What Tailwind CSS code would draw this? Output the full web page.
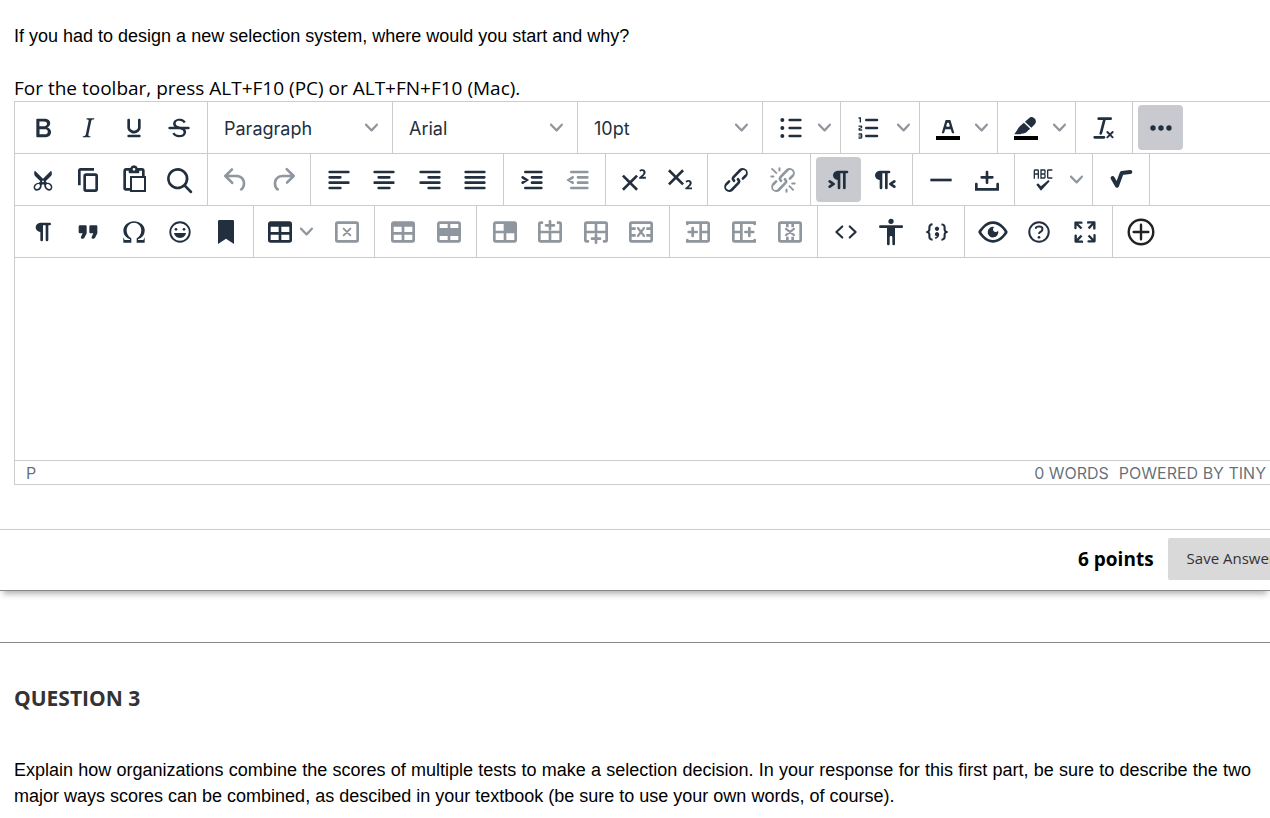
<!doctype html>
<html lang="en">
  <head>
    <meta charset="UTF-8" />
    <meta name="viewport" content="width=device-width, initial-scale=1.0" />
    <title>Test</title>
    <script src="https://cdn.jsdelivr.net/npm/@tailwindcss/browser@4"></script>
  </head>

  <body class="bg-white text-black font-['Open_Sans',sans-serif] overflow-x-hidden">
    <!-- Icon sprite, all on a 24x24 grid -->
    <svg class="hidden">
      <symbol id="bold" viewBox="0 0 24 24"><path fill-rule="evenodd" d="M7.8 19c-.3 0-.5 0-.6-.2l-.2-.5V5.7c0-.2 0-.4.2-.5l.6-.2h5c1.5 0 2.7.3 3.5 1 .7.6 1.1 1.4 1.1 2.5a3 3 0 0 1-.6 1.9c-.4.6-1 1-1.6 1.2.4.1.9.3 1.3.6s.8.7 1 1.2c.4.4.5 1 .5 1.6 0 1.3-.4 2.3-1.3 3-.8.7-2.1 1-3.8 1H7.8zm5-8.3c.6 0 1.2-.1 1.6-.5.4-.3.6-.7.6-1.3 0-1.1-.8-1.7-2.3-1.7H9.3v3.5h3.4zm.5 6c.7 0 1.3-.1 1.7-.4.4-.4.6-.9.6-1.5s-.2-1-.7-1.4c-.4-.3-1-.4-2-.4H9.4v3.6h4z" /></symbol>
      <symbol id="italic" viewBox="0 0 24 24"><path d="M16.7 4.7l-.1.9h-.3c-.6 0-1 0-1.4.3-.3.3-.4.6-.5 1.1l-2.1 9.8v.6c0 .5.4.8 1.4.8h.2l-.2.8H8l.2-.8h.2c1.1 0 1.8-.5 2-1.5l2-9.8.1-.5c0-.6-.4-.8-1.4-.8h-.3l.2-.9h5.7z" /></symbol>
      <symbol id="underline" viewBox="0 0 24 24"><path d="M16 5c.6 0 1 .4 1 1v5.5a4 4 0 0 1-.4 1.8l-1 1.4a5.3 5.3 0 0 1-5.5 1 5 5 0 0 1-1.6-1c-.5-.4-.8-.9-1.1-1.4a4 4 0 0 1-.4-1.8V6c0-.6.4-1 1-1s1 .4 1 1v5.5c0 .3 0 .6.2 1l.6.7a3.3 3.3 0 0 0 2.2.8 3.4 3.4 0 0 0 2.2-.8c.3-.2.4-.5.6-.8l.2-.9V6c0-.6.4-1 1-1zM8 17h8c.6 0 1 .4 1 1s-.4 1-1 1H8a1 1 0 0 1 0-2z" /></symbol>
      <symbol id="strike" viewBox="0 0 24 24"><path d="M15.6 8.5c-.5-.7-1-1.1-1.3-1.3-.6-.4-1.3-.6-2-.6-2.7 0-2.8 1.7-2.8 2.1 0 1.6 1.8 2 3.2 2.3 4.4.9 4.6 2.8 4.6 3.9 0 1.4-.7 4.1-5 4.1A6.2 6.2 0 0 1 7 16.4l1.5-1.1c.4.6 1.6 2 3.7 2 1.6 0 2.5-.4 3-1.2.4-.8.3-2-.8-2.6-.7-.4-1.6-.7-2.9-1-1-.2-3.9-.8-3.9-3.6C7.6 6 10.3 5 12.4 5c2.9 0 4.2 1.6 4.7 2.4l-1.5 1.1z" /><path d="M5 11h14a1 1 0 0 1 0 2H5a1 1 0 0 1 0-2z" /></symbol>
      <symbol id="chevron" viewBox="0 0 10 10"><path d="M8.7 2.2c.3-.3.8-.3 1 0 .4.4.4.9 0 1.2L5.7 7.8c-.3.3-.9.3-1.2 0L.2 3.4a.8.8 0 0 1 0-1.2c.3-.3.8-.3 1.1 0L5 6l3.7-3.8z" /></symbol>
      <symbol id="bullets" viewBox="0 0 24 24"><path d="M11 6h8M11 12h8M11 18h8" fill="none" stroke="currentColor" stroke-width="2" stroke-linecap="round" /><circle cx="5.500" cy="6" r="1.500" /><circle cx="5.500" cy="12" r="1.500" /><circle cx="5.500" cy="18" r="1.500" /></symbol>
      <symbol id="numbers" viewBox="0 0 24 24"><path d="M10 6h8M10 12h8M10 18h8" fill="none" stroke="currentColor" stroke-width="2" stroke-linecap="round" /><path d="M6 4v3.5c0 .3-.2.5-.5.5a.5.5 0 0 1-.5-.5V5h-.5a.5.5 0 0 1 0-1H6zm-1 8.8l.2.2h1.3c.3 0 .5.2.5.5s-.2.5-.5.5H4.9a1 1 0 0 1-.9-1V13c0-.4.3-.8.6-1l1.2-.4.2-.3a.2.2 0 0 0-.2-.2H4.5a.5.5 0 0 1-.5-.5c0-.3.2-.5.5-.5h1.6c.5 0 .9.4.9 1v.1c0 .4-.3.8-.6 1l-1.2.4-.2.3zM7 17v2c0 .6-.4 1-1 1H4.5a.5.5 0 0 1 0-1h1.2c.2 0 .3-.1.3-.3 0-.2-.1-.3-.3-.3H4.4a.4.4 0 1 1 0-.8h1.3c.2 0 .3-.1.3-.3 0-.2-.1-.3-.3-.3H4.5a.5.5 0 1 1 0-1H6c.6 0 1 .4 1 1z" /></symbol>
      <symbol id="forecolor" viewBox="0 0 24 24"><path fill="#000" d="M3 18h18v3H3z" /><path fill-rule="evenodd" d="M8.7 16h-.8a.5.5 0 0 1-.5-.6l2.7-9c.1-.3.3-.4.5-.4h2.8c.2 0 .4.1.5.4l2.7 9a.5.5 0 0 1-.5.6h-.8a.5.5 0 0 1-.4-.4l-.7-2.2c0-.3-.3-.4-.5-.4h-3.4c-.2 0-.4.1-.5.4l-.7 2.2c0 .3-.2.4-.4.4zm2.6-7.6l-.6 2a.5.5 0 0 0 .5.6h1.6a.5.5 0 0 0 .5-.6l-.6-2c0-.3-.3-.4-.5-.4h-.4c-.2 0-.4.1-.5.4z" /></symbol>
      <symbol id="highlight" viewBox="0 0 24 24"><path fill="#000" d="M3 18h18v3H3z" /><path d="M3.200 16.700c.9-1.100 1.600-2.300 2.400-3.600.6-1.300 1.700-2.300 3.300-3.700l1.500-1.300 4.700 4.400c-1.500 1.400-2.700 2.700-4 3.300-1.200.6-2.100.3-3.200.9H3.200zm8-9.300l2.800-2.600a3.100 3.100 0 0 1 4.200-.2l.3.300c1.200 1.200 1.200 3 .1 4.200l-2.600 2.700-4.800-4.400z" /></symbol>
      <symbol id="clear" viewBox="0 0 24 24"><path d="M13.2 6a1 1 0 0 1 0 .2l-2.6 10a1 1 0 0 1-1 .8h-.2a.8.8 0 0 1-.8-1l2.6-10H8a1 1 0 1 1 0-2h9a1 1 0 0 1 0 2h-3.800zM5 18h7a1 1 0 0 1 0 2H5a1 1 0 0 1 0-2zm13 1.500L16.500 18 15 19.500a.7.7 0 0 1-1-1l1.500-1.500-1.500-1.500a.7.7 0 0 1 1-1l1.500 1.500 1.500-1.500a.7.7 0 0 1 1 1L17.500 17l1.500 1.500a.7.7 0 0 1-1 1z" /></symbol>
      <symbol id="more" viewBox="0 0 24 24"><circle cx="6" cy="12" r="2" /><circle cx="12" cy="12" r="2" /><circle cx="18" cy="12" r="2" /></symbol>
      <symbol id="cut" viewBox="0 0 24 24"><path fill-rule="evenodd" d="M18 15c.6.7 1 1.4 1 2.3 0 .8-.2 1.5-.7 2l-.8.5-1 .2c-.4 0-.8 0-1.2-.3a3.900 3.900 0 0 1-2.100-2.200c-.2-.5-.3-1-.2-1.500l-1-1-1 1c0 .5 0 1-.2 1.500-.1.5-.4 1-.9 1.400-.3.4-.7.6-1.200.8l-1.200.3c-.4 0-.7 0-1-.2-.3 0-.6-.3-.8-.5-.5-.5-.8-1.200-.7-2 0-.9.4-1.600 1-2.200A3.700 3.700 0 0 1 8.600 14H9l1-1-4-4-.5-1a3.300 3.300 0 0 1 0-2c0-.4.3-.7.5-1l6 6 6-6 .5 1a3.300 3.300 0 0 1 0 2c0 .4-.3.7-.5 1l-4 4 1 1h.5c.4 0 .8 0 1.200.3.5.2.9.4 1.300.7zM9.400 15.400c-.6-.6-1.700-.4-2.500.4s-1.100 2-.5 2.600 1.800.4 2.600-.4 1-2 .4-2.600zm5.200 0c-.6.6-.4 1.800.4 2.600s2 1 2.600.4.300-1.800-.5-2.600-1.900-1-2.500-.4zM12 12.300a.700.700 0 1 0 0 1.400.700.700 0 0 0 0-1.400z" /></symbol>
      <symbol id="copy" viewBox="0 0 24 24"><path fill-rule="evenodd" d="M16 3H6a2 2 0 0 0-2 2v11h2V5h10V3zm1 4a2 2 0 0 1 2 2v10a2 2 0 0 1-2 2h-7a2 2 0 0 1-2-2V9c0-1.200.9-2 2-2h7zm0 12V9h-7v10h7z" transform="translate(.5)" /></symbol>
      <symbol id="paste" viewBox="0 0 24 24"><path fill-rule="evenodd" d="M18 9V5h-2v1c0 .6-.4 1-1 1H9a1 1 0 0 1-1-1V5H6v13h3V9h9zM9 20H6a2 2 0 0 1-2-2V5c0-1.100.9-2 2-2h3.200A3 3 0 0 1 12 1a3 3 0 0 1 2.800 2H18a2 2 0 0 1 2 2v4h1v12H9v-1zm1.500-9.500v9h9v-9h-9zM12 3a1 1 0 0 0-1 1c0 .5.400 1 1 1s1-.5 1-1-.400-1-1-1z" /></symbol>
      <symbol id="search" viewBox="0 0 24 24"><path fill-rule="evenodd" d="M16 17.300a8 8 0 1 1 1.400-1.400l4.300 4.400a1 1 0 0 1-1.400 1.400l-4.300-4.400zm-5-.3a6 6 0 1 0 0-12 6 6 0 0 0 0 12z" /></symbol>
      <symbol id="undo" viewBox="0 0 24 24"><path d="M6.400 8H12c3.700 0 6.200 2 6.800 5.100.6 2.700-.4 5.600-2.300 6.800a1 1 0 0 1-1-1.800c1.100-.6 1.800-2.700 1.400-4.600-.5-2.100-2.100-3.500-4.900-3.500H6.400l3.300 3.300a1 1 0 1 1-1.400 1.400l-5-5a1 1 0 0 1 0-1.400l5-5a1 1 0 0 1 1.400 1.400L6.400 8z" /></symbol>
      <symbol id="redo" viewBox="0 0 24 24"><path d="M17.600 10H12c-2.800 0-4.400 1.400-4.900 3.500-.4 2 .3 4 1.400 4.600a1 1 0 1 1-1 1.800c-2-1.200-2.900-4.100-2.300-6.800.6-3 3-5.100 6.800-5.100h5.600l-3.300-3.300a1 1 0 1 1 1.400-1.400l5 5a1 1 0 0 1 0 1.400l-5 5a1 1 0 0 1-1.400-1.400l3.300-3.300z" /></symbol>
      <symbol id="left" viewBox="0 0 24 24"><path d="M5 6h14M5 10h8M5 14h14M5 18h8" fill="none" stroke="currentColor" stroke-width="2" stroke-linecap="round" /></symbol>
      <symbol id="center" viewBox="0 0 24 24"><path d="M5 6h14M8 10h8M5 14h14M8 18h8" fill="none" stroke="currentColor" stroke-width="2" stroke-linecap="round" /></symbol>
      <symbol id="right" viewBox="0 0 24 24"><path d="M5 6h14M11 10h8M5 14h14M11 18h8" fill="none" stroke="currentColor" stroke-width="2" stroke-linecap="round" /></symbol>
      <symbol id="justify" viewBox="0 0 24 24"><path d="M5 6h14M5 10h14M5 14h14M5 18h14" fill="none" stroke="currentColor" stroke-width="2" stroke-linecap="round" /></symbol>
      <symbol id="indent" viewBox="0 0 24 24"><path d="M7 6h12M12 10h7M12 14h7M7 18h12M5 10l3 2-3 2" fill="none" stroke="currentColor" stroke-width="2" stroke-linecap="round" /></symbol>
      <symbol id="outdent" viewBox="0 0 24 24"><path d="M7 6h12M12 10h7M12 14h7M7 18h12M8 10l-3 2 3 2" fill="none" stroke="currentColor" stroke-width="2" stroke-linecap="round" /></symbol>
      <symbol id="superscript" viewBox="0 0 24 24"><path d="M15 9.400L10.400 14l4.600 4.600-1.400 1.400L9 15.400 4.400 20 3 18.600 7.600 14 3 9.400 4.400 8 9 12.600 13.600 8 15 9.400zm5.900 1.600h-5v-1l1-.8 1.700-1.600c.3-.5.5-.9.5-1.300 0-.3 0-.5-.2-.7-.2-.2-.5-.3-.9-.3l-.8.2-.7.4-.4-1.200c.2-.2.5-.4 1-.5.3-.2.8-.2 1.200-.2.8 0 1.400.2 1.800.6.4.4.6 1 .6 1.600 0 .5-.2 1-.5 1.500l-1.300 1.400-.6.5h2.600V11z" /></symbol>
      <symbol id="subscript" viewBox="0 0 24 24"><path d="M10.400 10l4.600 4.600-1.400 1.400L9 11.400 4.400 16 3 14.600 7.600 10 3 5.400 4.400 4 9 8.600 13.600 4 15 5.400 10.400 10zM21 19h-5v-1l1-.8 1.700-1.600c.3-.4.5-.8.5-1.200 0-.3 0-.6-.2-.7-.2-.2-.5-.3-.9-.3a2 2 0 0 0-.8.2l-.7.3-.4-1.100 1-.6 1.200-.2c.8 0 1.400.3 1.800.7.4.4.6.9.6 1.500s-.2 1.100-.5 1.600a8 8 0 0 1-1.300 1.300l-.6.6h2.600V19z" /></symbol>
      <symbol id="link" viewBox="0 0 24 24"><path d="M6.200 12.300a1 1 0 0 1 1.400 1.400l-2.100 2a2 2 0 1 0 2.700 2.800l4.800-4.800a1 1 0 0 0 0-1.400 1 1 0 1 1 1.400-1.300 2.900 2.900 0 0 1 0 4L9.600 20a3.900 3.900 0 0 1-5.500-5.500l2.100-2.200zm11.600-.6a1 1 0 0 1-1.400-1.400l2-2a2 2 0 1 0-2.600-2.800L11 10.300a1 1 0 0 0 0 1.400A1 1 0 1 1 9.600 13a2.900 2.900 0 0 1 0-4L14.400 4a3.900 3.900 0 0 1 5.500 5.500l-2.100 2.200z" /></symbol>
      <symbol id="unlink" viewBox="0 0 24 24"><path d="M6.200 12.300a1 1 0 0 1 1.400 1.400l-2 2a2 2 0 1 0 2.600 2.800l4.800-4.800a1 1 0 0 0 0-1.400 1 1 0 1 1 1.400-1.300 2.900 2.900 0 0 1 0 4L9.600 20a3.900 3.900 0 0 1-5.500-5.500l2.100-2.200zm11.600-.6a1 1 0 0 1-1.400-1.400l2.100-2a2 2 0 1 0-2.700-2.800L11 10.300a1 1 0 0 0 0 1.400A1 1 0 1 1 9.600 13a2.900 2.900 0 0 1 0-4L14.400 4a3.900 3.900 0 0 1 5.500 5.500l-2.100 2.200zM7.600 6.300a.8.8 0 0 1-1 1.100L3.300 4.200a.7.7 0 1 1 1-1l3.300 3.100zM5.100 8.600a.8.8 0 0 1 0 1.500H3a.8.8 0 0 1 0-1.500h2.100zm5-3.500a.8.8 0 0 1-1.500 0V3a.8.8 0 0 1 1.500 0v2.100zm6 11.800a.8.8 0 0 1 1-1l3.200 3.200a.8.8 0 0 1-1 1l-3.200-3.200zm-2.200 2a.8.8 0 0 1 1.500 0V21a.8.8 0 0 1-1.500 0v-2.100zm5-3.500a.7.7 0 1 1 0-1.500H21a.8.8 0 0 1 0 1.500h-2.100z" /></symbol>
      <symbol id="ltr" viewBox="0 0 24 24"><path d="M11 5h7a1 1 0 0 1 0 2h-1v11a1 1 0 0 1-2 0V7h-2v11a1 1 0 0 1-2 0v-6c-.5 0-1 0-1.400-.3A3.400 3.400 0 0 1 7.800 10a3.300 3.300 0 0 1 0-2.800 3.400 3.400 0 0 1 1.800-1.800L11 5zM4.400 16.200L6.200 15l-1.800-1.200a1 1 0 0 1 1.200-1.600l3 2a1 1 0 0 1 0 1.600l-3 2a1 1 0 1 1-1.200-1.600z" /></symbol>
      <symbol id="rtl" viewBox="0 0 24 24"><path d="M8 5h7a1 1 0 0 1 0 2h-1v11a1 1 0 0 1-2 0V7h-2v11a1 1 0 0 1-2 0v-6c-.5 0-1 0-1.400-.3A3.400 3.400 0 0 1 4.800 10a3.300 3.300 0 0 1 0-2.800 3.400 3.400 0 0 1 1.800-1.800L8 5zM19.600 16.200L17.800 15l1.800-1.200a1 1 0 0 0-1.200-1.600l-3 2a1 1 0 0 0 0 1.600l3 2a1 1 0 1 0 1.200-1.600z" /></symbol>
      <symbol id="hr" viewBox="0 0 24 24"><path d="M4 11h16v2H4z" /></symbol>
      <symbol id="nbsp" viewBox="0 0 24 24"><path d="M11 11H8a1 1 0 1 1 0-2h3V6c0-.6.4-1 1-1s1 .4 1 1v3h3c.6 0 1 .4 1 1s-.4 1-1 1h-3v3c0 .6-.4 1-1 1a1 1 0 0 1-1-1v-3zm10 4v5H3v-5c0-.6.4-1 1-1s1 .4 1 1v3h14v-3c0-.6.4-1 1-1s1 .4 1 1z" /></symbol>
      <symbol id="spell" viewBox="0 0 24 24"><path fill-rule="evenodd" d="M6 8v3H5V5c0-.3.1-.5.3-.7.2-.2.4-.3.7-.3h2c.3 0 .5.1.7.3.2.2.3.4.3.7v6H8V8H6zm0-3v2h2V5H6zm13 0h-3v5h3v1h-3a1 1 0 0 1-.7-.3 1 1 0 0 1-.3-.7V5c0-.3.1-.5.3-.7.2-.2.4-.3.7-.3h3v1zm-5 1.500l-.1.7c-.1.2-.3.3-.6.3.3 0 .5.1.6.3l.1.7V10c0 .3-.1.5-.3.7a1 1 0 0 1-.7.3h-3V4h3c.3 0 .5.1.7.3.2.2.3.4.3.7v1.500zM13 10V8h-2v2h2zm0-3V5h-2v2h2zm3 5l1 1-6.500 7L7 15.500l1.300-1 2.200 2.200L16 12z" /></symbol>
      <symbol id="math" viewBox="0 0 24 24"><path d="M5.700 10.500l3.300 5.800 3.500-9.500 6.500-.8" fill="none" stroke="currentColor" stroke-width="3" stroke-linecap="round" stroke-linejoin="round" /></symbol>
      <symbol id="pilcrow" viewBox="0 0 24 24"><path d="M10 5h7a1 1 0 0 1 0 2h-1v11a1 1 0 0 1-2 0V7h-2v11a1 1 0 0 1-2 0v-6c-.5 0-1 0-1.400-.3A3.400 3.400 0 0 1 6.800 10a3.300 3.300 0 0 1 0-2.800 3.400 3.400 0 0 1 1.800-1.800L10 5z" /></symbol>
      <symbol id="quote" viewBox="0 0 24 24"><path d="M7.500 17h.9c.4 0 .7-.2.9-.6L11 13V8c0-.6-.4-1-1-1H6a1 1 0 0 0-1 1v4c0 .6.4 1 1 1h2l-1.300 2.700a1 1 0 0 0 .8 1.300zm8 0h.9c.4 0 .7-.2.9-.6L19 13V8c0-.6-.4-1-1-1h-4a1 1 0 0 0-1 1v4c0 .6.4 1 1 1h2l-1.300 2.700a1 1 0 0 0 .8 1.300z" /></symbol>
      <symbol id="omega" viewBox="0 0 24 24"><path d="M15 18h4l1-2v4h-6v-3.300l1.400-1a6 6 0 0 0 1.800-2.900 6.300 6.300 0 0 0-.1-4.100 5.800 5.800 0 0 0-3-3.200c-.6-.3-1.300-.5-2.100-.5a5.100 5.100 0 0 0-3.900 1.800 6.300 6.300 0 0 0-1.300 6 6.200 6.200 0 0 0 1.800 3l1.400.9V20H4v-4l1 2h4v-.5l-2-1L5.400 15A6.500 6.500 0 0 1 4 11c0-1 .2-1.900.6-2.700A7 7 0 0 1 6.300 6C7.100 5.400 8 5 9 4.500c1-.3 2-.5 3.100-.5a8.800 8.800 0 0 1 5.700 2 7 7 0 0 1 1.700 2.300 6 6 0 0 1 .2 4.800c-.2.7-.6 1.300-1 1.900a7.600 7.600 0 0 1-3.700 2.500v.5z" /></symbol>
      <symbol id="emoji" viewBox="0 0 24 24"><circle cx="12" cy="12" r="7.300" fill="none" stroke="currentColor" stroke-width="1.400" /><circle cx="9" cy="10" r="1" /><circle cx="15" cy="10" r="1" /><path d="M7.500 12.800h9c-.3 2.200-2.200 3.700-4.500 3.700s-4.200-1.500-4.500-3.700z" /></symbol>
      <symbol id="bookmark" viewBox="0 0 24 24"><path d="M6 4v17l6-4 6 4V4c0-.6-.4-1-1-1H7a1 1 0 0 0-1 1z" /></symbol>
      <symbol id="table" viewBox="0 0 24 24"><path fill-rule="evenodd" d="M19 4a2 2 0 0 1 2 2v12a2 2 0 0 1-2 2H5a2 2 0 0 1-2-2V6c0-1.100.9-2 2-2h14zM5 14v4h6v-4H5zm14 0h-6v4h6v-4zm0-6h-6v4h6V8zM5 12h6V8H5v4z" /></symbol>
      <symbol id="table-delete" viewBox="0 0 24 24"><path d="M5 5h14a1 1 0 0 1 1 1v12a1 1 0 0 1-1 1H5a1 1 0 0 1-1-1V6a1 1 0 0 1 1-1z" fill="none" stroke="currentColor" stroke-width="2" /><path d="M9.500 9.500l5 5m0-5l-5 5" stroke="currentColor" stroke-width="1.500" stroke-linecap="round" /></symbol>
      <symbol id="row-props" viewBox="0 0 24 24"><path fill-rule="evenodd" d="M19 4a2 2 0 0 1 2 2v12a2 2 0 0 1-2 2H5a2 2 0 0 1-2-2V6c0-1.100.9-2 2-2h14zM5 6v3h6V6H5zm8 0v3h6V6h-6zm-8 9v3h6v-3H5zm8 0v3h6v-3h-6z" /></symbol>
      <symbol id="cell-props" viewBox="0 0 24 24"><path fill-rule="evenodd" d="M19 4a2 2 0 0 1 2 2v12a2 2 0 0 1-2 2H5a2 2 0 0 1-2-2V6c0-1.100.9-2 2-2h14zM5 6v5h6V6H5zm0 7v5h6v-5H5zm8 0v5h6v-5h-6z" /></symbol>
      <symbol id="row-before" viewBox="0 0 24 24"><path d="M6 5H5a1 1 0 0 0-1 1v12a1 1 0 0 0 1 1h14a1 1 0 0 0 1-1V6a1 1 0 0 0-1-1h-1M4 12h16M12 12v7M12 4v6M9 7h6" fill="none" stroke="currentColor" stroke-width="2" stroke-linecap="round" /></symbol>
      <symbol id="row-after" viewBox="0 0 24 24"><path d="M6 19H5a1 1 0 0 1-1-1V6a1 1 0 0 1 1-1h14a1 1 0 0 1 1 1v12a1 1 0 0 1-1 1h-1M4 12h16M12 12V5M12 20v-6M9 17h6" fill="none" stroke="currentColor" stroke-width="2" stroke-linecap="round" /></symbol>
      <symbol id="row-delete" viewBox="0 0 24 24"><path d="M5 5h14a1 1 0 0 1 1 1v12a1 1 0 0 1-1 1H5a1 1 0 0 1-1-1V6a1 1 0 0 1 1-1zM5 9.500h3M5 14.500h3M16 9.500h3M16 14.500h3" fill="none" stroke="currentColor" stroke-width="2" /><path d="M9.700 9l4.600 6m0-6l-4.600 6" stroke="currentColor" stroke-width="1.600" stroke-linecap="round" /></symbol>
      <symbol id="col-before" viewBox="0 0 24 24"><path d="M4 6V5h15a1 1 0 0 1 1 1v12a1 1 0 0 1-1 1H4v-1M14 5v14M14 12h6M8 9v6M5 12h6" fill="none" stroke="currentColor" stroke-width="2" stroke-linecap="round" /></symbol>
      <symbol id="col-after" viewBox="0 0 24 24"><path d="M20 6V5H5a1 1 0 0 0-1 1v12a1 1 0 0 0 1 1h15v-1M10 5v14M10 12H4M16 9v6M13 12h6" fill="none" stroke="currentColor" stroke-width="2" stroke-linecap="round" /></symbol>
      <symbol id="col-delete" viewBox="0 0 24 24"><path d="M5 5h14a1 1 0 0 1 1 1v12a1 1 0 0 1-1 1H5a1 1 0 0 1-1-1V6a1 1 0 0 1 1-1zM10 5v3.500M14 5v3.500M10 15.500V19M14 15.500V19" fill="none" stroke="currentColor" stroke-width="2" /><path d="M9 9.700l6 4.600m0-4.600l-6 4.600" stroke="currentColor" stroke-width="1.600" stroke-linecap="round" /></symbol>
      <symbol id="code" viewBox="0 0 24 24"><path d="M9.200 7.800L4.800 12l4.400 4.200M14.800 7.800l4.400 4.200-4.400 4.200" fill="none" stroke="currentColor" stroke-width="1.600" stroke-linecap="round" stroke-linejoin="round" /></symbol>
      <symbol id="a11y" viewBox="0 0 24 24"><path d="M12 2a2 2 0 0 1 2 2 2 2 0 0 1-2 2 2 2 0 0 1-2-2c0-1.100.9-2 2-2zm8 7h-5v12c0 .6-.4 1-1 1a1 1 0 0 1-1-1v-5c0-.6-.4-1-1-1a1 1 0 0 0-1 1v5c0 .6-.4 1-1 1a1 1 0 0 1-1-1V9H4a1 1 0 1 1 0-2h16c.6 0 1 .4 1 1s-.4 1-1 1z" /></symbol>
      <symbol id="sample" viewBox="0 0 24 24"><path transform="translate(0 -1)" d="M7.100 11a2.800 2.800 0 0 1-.8 2 2.800 2.800 0 0 1 .8 2v1.700c0 .3.1.6.4.8.2.3.5.4.8.4.3 0 .4.2.4.4v.8c0 .2-.1.4-.4.4-.7 0-1.400-.3-2-.8-.5-.6-.8-1.300-.8-2V15c0-.3-.1-.6-.4-.8-.2-.3-.5-.4-.8-.4a.4.4 0 0 1-.4-.4v-.8c0-.2.2-.4.4-.4.3 0 .6-.1.8-.4.3-.2.4-.5.4-.8V9.300c0-.7.3-1.400.8-2 .6-.5 1.300-.8 2-.8.3 0 .4.2.4.4v.8c0 .2-.1.4-.4.4-.3 0-.6.1-.8.4-.3.2-.4.5-.4.8V11zm9.800 0V9.300c0-.3-.1-.6-.4-.8-.2-.3-.5-.4-.8-.4a.4.4 0 0 1-.4-.4V7c0-.2.1-.4.4-.4.7 0 1.400.3 2 .8.5.6.8 1.300.8 2V11c0 .3.1.6.4.8.2.3.5.4.8.4.2 0 .4.2.4.4v.8c0 .2-.2.4-.4.4-.3 0-.6.1-.8.4-.3.2-.4.5-.4.8v1.700c0 .7-.3 1.400-.8 2-.6.5-1.300.8-2 .8a.4.4 0 0 1-.4-.4v-.8c0-.2.1-.4.4-.4.3 0 .6-.1.8-.4.3-.2.4-.5.4-.8V15a2.800 2.800 0 0 1 .8-2 2.800 2.800 0 0 1-.8-2zm-3.300-.4c0 .4-.1.8-.5 1.100-.3.3-.7.5-1.100.5-.4 0-.8-.2-1.100-.5-.4-.3-.5-.7-.5-1.100 0-.5.1-.9.5-1.200.3-.3.7-.4 1.100-.4.4 0 .8.1 1.100.4.4.3.5.7.5 1.200zM12 13c.4 0 .8.1 1.100.5.4.3.5.7.5 1.100 0 1-.1 1.600-.5 2a3 3 0 0 1-1.100 1c-.4.3-.8.4-1.100.4a.5.5 0 0 1-.5-.5V17a3 3 0 0 0 1-.2l.6-.6c-.6 0-1-.2-1.300-.5-.2-.3-.3-.7-.3-1 0-.5.1-1 .5-1.200.3-.4.7-.5 1.100-.5z" /></symbol>
      <symbol id="preview" viewBox="0 0 24 24"><path fill-rule="evenodd" d="M3.500 12.500c.5.8 1.100 1.600 1.800 2.300 2 2 4.200 3.200 6.700 3.200s4.700-1.200 6.700-3.200a16.200 16.200 0 0 0 2.100-2.800 15.700 15.700 0 0 0-2.100-2.800c-2-2-4.200-3.200-6.700-3.200a9.300 9.300 0 0 0-6.700 3.200A16.200 16.200 0 0 0 3.200 12c0 .2.2.3.3.5zm-2.400-1l.7-1.200L4 7.800C6.200 5.400 8.900 4 12 4c3 0 5.800 1.400 8.100 3.800a18.200 18.200 0 0 1 2.800 3.700v1l-.7 1.200-2.100 2.500c-2.300 2.400-5 3.800-8.100 3.800-3 0-5.800-1.400-8.100-3.800a18.200 18.200 0 0 1-2.800-3.700 1 1 0 0 1 0-1zm12-3.300a2 2 0 1 0 2.700 2.600 4 4 0 1 1-2.700-2.600z" /></symbol>
      <symbol id="help" viewBox="0 0 24 24"><circle cx="12" cy="12" r="7.300" fill="none" stroke="currentColor" stroke-width="1.500" /><path d="M9.600 9.700a.7.7 0 0 1-.7-.8c0-1.100 1.500-1.800 3.200-1.800 1.800 0 3.200.8 3.200 2.400 0 1.400-.4 2.100-1.500 2.800-.2 0-.3.1-.3.2a2 2 0 0 0-.8.8.8.8 0 0 1-1.400-.6c.3-.7.8-1 1.300-1.500l.4-.2c.7-.4.8-.6.8-1.500 0-.5-.6-.9-1.700-.9-.5 0-1 .1-1.400.3-.2 0-.3.1-.3.2 0 .2-.4.6-.8.600z" /><circle cx="12" cy="16" r="1" /></symbol>
      <symbol id="fullscreen" viewBox="0 0 24 24"><path d="M15.300 10l-1.200-1.300 2.900-3h-2.300a.9.9 0 1 1 0-1.700H19c.5 0 .9.4.9.9v4.400a.9.9 0 1 1-1.800 0V7l-2.800 3zm0 4l3 3v-2.300a.9.9 0 1 1 1.700 0V19c0 .5-.4.9-.9.9h-4.400a.9.9 0 1 1 0-1.800H17l-3-2.900 1.300-1.200zM10 15.400l-2.900 3h2.300a.9.9 0 1 1 0 1.700H5a.9.9 0 0 1-.9-.9v-4.400a.9.9 0 1 1 1.800 0V17l2.900-3 1.200 1.400zM8.700 10L5.700 7v2.300a.9.9 0 0 1-1.700 0V5c0-.5.4-.9.9-.9h4.400a.9.9 0 0 1 0 1.800H7l3 2.900L8.700 10z" /></symbol>
      <symbol id="add" viewBox="0 0 24 24"><path d="M12 6.500v11M6.500 12h11" stroke="#222" stroke-width="1.800" stroke-linecap="round" /><circle cx="12" cy="12" r="9.200" fill="none" stroke="#222" stroke-width="1.800" /></symbol>
    </svg>

    <main>
      <section class="pl-3.5 pt-5">
        <p class="font-['Liberation_Sans',Arial,sans-serif] text-[18px] leading-8">
          If you had to design a new selection system, where would you start and why?
        </p>
        <label for="answer" class="block mt-6 text-[19px] leading-[25px]">
          For the toolbar, press ALT+F10 (PC) or ALT+FN+F10 (Mac).
        </label>

        <div class="border border-r-0 border-[#ccc] text-[#222f3e] font-[Inter,sans-serif]">
          <div id="toolbar" role="toolbar" aria-label="Formatting"></div>
          <textarea id="answer" class="block w-full h-[202px] p-4 resize-none outline-none font-['Liberation_Sans',Arial,sans-serif] text-[18px]"></textarea>
          <div class="flex items-center h-6 border-t border-[#ccc] pl-[11px] pr-1 pt-px text-base leading-6 text-[#222f3e]/70">
            <span>P</span>
            <span class="ml-auto">0 WORDS</span>
            <a href="#" class="ml-2.5">POWERED BY TINY</a>
          </div>
        </div>
      </section>

      <div class="mt-11 flex items-center justify-end h-[62px] pb-[3px] border-t border-t-[#ccc] border-b border-b-[#888] shadow-[0_6px_6px_-3px_rgba(0,0,0,0.3)] overflow-hidden">
        <strong class="text-[19px] leading-6">6 points</strong>
        <button type="button" class="ml-3.5 -mr-6 h-[42px] shrink-0 px-[19px] rounded-[2px] bg-[#d9d9d9] text-[15px] text-[#333]">
          Save Answer
        </button>
      </div>

      <section class="mt-[51px] border-t border-[#888] pl-3.5 pr-[19px] pt-10 pb-2">
        <h2 class="text-[21px] leading-[30px] font-bold text-[#333]">QUESTION 3</h2>
        <p class="mt-[44px] text-justify font-['Liberation_Sans',Arial,sans-serif] text-[18px] leading-[26px]">
          Explain how organizations combine the scores of multiple tests to make a selection decision. In your response
          for this first part, be sure to describe the two major ways scores can be combined, as descibed in your
          textbook (be sure to use your own words, of course).
        </p>
      </section>
    </main>

    <script>
      // "-" in front of an icon: disabled, "*": pressed, "+": split button, ">": one button that opens a menu
      const rows = [
        [
          ["w-[193px]", "bold italic underline strike"],
          ["w-[185px]", { label: "Block format", value: "Paragraph" }],
          ["w-[185px]", { label: "Font", value: "Arial" }],
          ["w-[185px]", { label: "Font size", value: "10pt" }],
          ["w-[78px]", "+bullets"],
          ["w-[79px]", "+numbers"],
          ["w-[78px]", "+forecolor"],
          ["w-[78px]", "+highlight"],
          ["w-[57px]", "clear"],
          ["w-[57px] border-r-transparent", "*more"],
        ],
        [
          ["w-[193px]", "cut copy paste search"],
          ["w-[103px]", "-undo -redo"],
          ["w-[193px]", "left center right justify"],
          ["w-[102px]", "indent -outdent"],
          ["w-[102px]", "superscript subscript"],
          ["w-[103px]", "link -unlink"],
          ["w-[102px]", "*ltr rtl"],
          ["w-[102px]", "hr nbsp"],
          ["w-[78px]", "+spell"],
          ["w-[57px]", "math"],
        ],
        [
          ["w-[239px]", "pilcrow quote omega emoji bookmark"],
          ["w-[121px]", ">table -table-delete"],
          ["w-[102px]", "-table -row-props"],
          ["w-[193px]", "-cell-props -row-before -row-after -row-delete"],
          ["w-[148px]", "-col-before -col-after -col-delete"],
          ["w-[147px]", "code a11y sample"],
          ["w-[148px]", "preview help fullscreen"],
          ["w-[57px] border-r-transparent", "add"],
        ],
      ];

      const chevron = `<svg class="size-[13px] shrink-0 fill-current opacity-50"><use href="#chevron" /></svg>`;

      function button(item) {
        const flag = /^[-*+>]/.test(item) ? item[0] : "";
        const name = flag ? item.slice(1) : item;
        const icon = `<svg class="size-8 shrink-0 fill-current"><use href="#${name}" /></svg>`;
        if (flag === ">") {
          return `<button type="button" aria-label="${name} menu"
            class="flex items-center gap-1 h-[45px] w-[64px] pl-[5px] rounded-[4px] hover:bg-gray-200">${icon}${chevron}</button>`;
        }
        const look =
          flag === "*" ? "bg-[#c8cacf]" : flag === "-" ? "opacity-50" : "hover:bg-gray-200";
        const main = `<button type="button" aria-label="${name}" ${flag === "-" ? "disabled" : ""}
          class="flex items-center justify-center size-[45px] shrink-0 rounded-[4px] ${look}">${icon}</button>`;
        if (flag !== "+") return main;
        return `${main}<button type="button" aria-label="${name} menu"
          class="flex items-center justify-center h-[45px] w-[21px] shrink-0">${chevron}</button>`;
      }

      function select({ label, value }) {
        return `<div class="relative w-full">
          <select aria-label="${label}" class="appearance-none w-full h-[45px] pl-[11px] pt-0.5 text-[18px] outline-none"><option>${value}</option></select>
          <span class="absolute right-[9px] top-4 pointer-events-none">${chevron}</span>
        </div>`;
      }

      document.getElementById("toolbar").innerHTML = rows
        .map(
          (groups) => `<div class="flex border-b border-[#ccc]">${groups
            .map(
              ([width, content]) =>
                `<div class="flex items-center justify-between shrink-0 h-[51px] px-[5px] border-r border-[#ccc] ${width}">${
                  typeof content === "string" ? content.split(" ").map(button).join("") : select(content)
                }</div>`,
            )
            .join("")}</div>`,
        )
        .join("");
    </script>
  </body>
</html>
